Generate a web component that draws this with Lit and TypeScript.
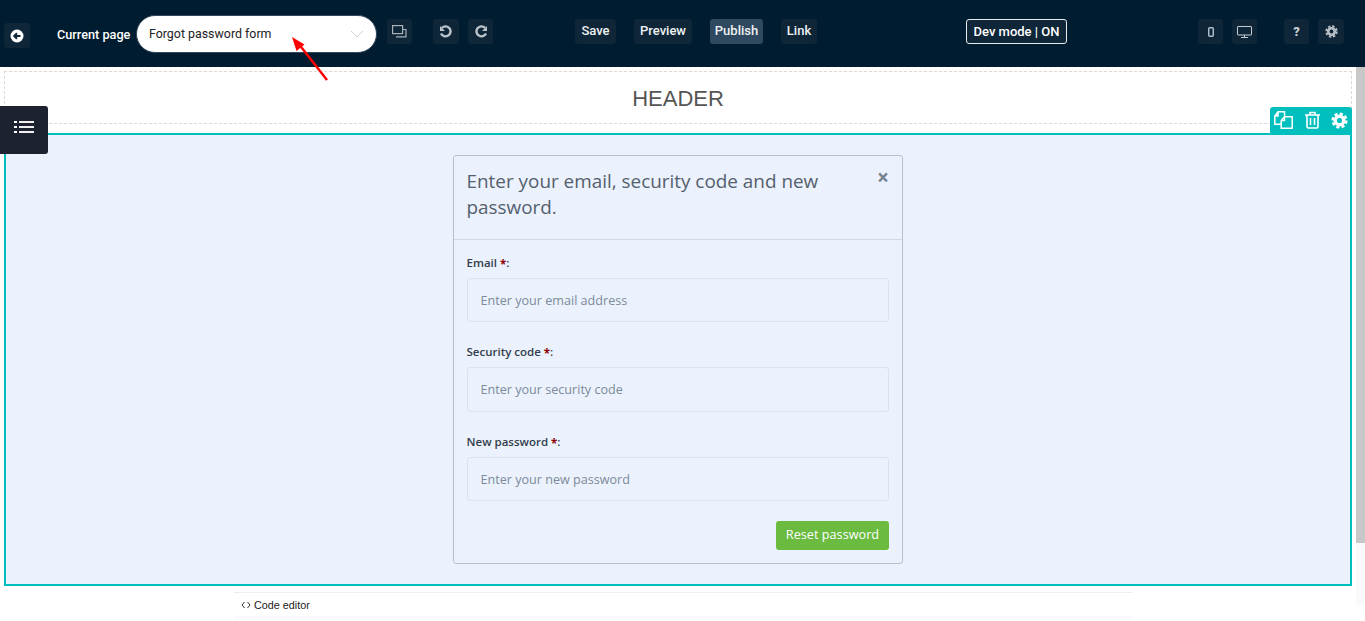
import { LitElement, html, css, svg } from "lit";
import { customElement } from "lit/decorators.js";

const gear = (c: string) => svg`<circle cx="8" cy="8" r="4" fill="none" stroke=${c} stroke-width="3.2"/><circle cx="8" cy="8" r="6.4" fill="none" stroke=${c} stroke-width="2.4" stroke-dasharray="3 2.03"/>`;

@customElement("app-root")
export class AppRoot extends LitElement {
  static styles = css`
    :host { display: block; height: 621px; overflow: hidden; position: relative; background: #fff; font-family: "Liberation Sans", Arial, sans-serif; }
    * { box-sizing: border-box; }
    .toolbar { height: 67px; background: #001c30; display: flex; align-items: flex-start; padding: 19px 0 0 4px; font-family: Roboto, "Liberation Sans", sans-serif; color: #fff; }
    .btn { height: 25px; min-width: 25px; background: #0e2638; border-radius: 3px; display: flex; align-items: center; justify-content: center; font-size: 13px; font-weight: 500; color: #eef1f3; padding: 0 0 2px; flex: none; }
    .btn svg { display: block; flex: none; }
    .icon { padding: 0; width: 25px; }
    .back { margin-top: 4px; width: 26px; }
    .label { margin: 8px 0 0 27px; width: 79px; font-size: 12.7px; font-weight: 500; line-height: 16px; white-space: nowrap; flex: none; }
    .select { margin: -4px 0 0 0; width: 241px; height: 38px; border-radius: 19px; background: #fff; border: 1px solid #33475a; color: #222; font-size: 12.4px; display: flex; align-items: center; justify-content: space-between; padding: 0 12px 1px 12px; flex: none; }
    .ml10 { margin-left: 10px; } .ml21 { margin-left: 21px; } .ml9 { margin-left: 9px; }
    .ml18 { margin-left: 18px; } .ml82 { margin-left: 82px; } .ml149 { margin-left: 149px; } .ml27 { margin-left: 27px; }
    .ml131 { margin-left: 131px; }
    .publish { background: #2f4a60; }
    .dev { height: 25px; width: 101px; border: 1px solid #e8ecef; border-radius: 3px; background: #0e2638; font-size: 13px; font-weight: 500; display: flex; align-items: center; justify-content: center; flex: none; }
    .w41 { width: 41px; } .w58 { width: 58px; } .w53 { width: 53px; } .w36 { width: 36px; }
    .w26 { width: 26px; }
    .help { font-size: 13px; font-weight: 900; color: #c7ccd1; }

    .body { display: flex; height: 554px; }
    .page { flex: 1; min-width: 0; padding: 4px 4px 0 4px; position: relative; }
    .scroll { width: 9px; height: 538px; background: #fafafa; flex: none; }
    .thumb { height: 476px; background: #c8c8c8; }
    .header { height: 53px; border: 1px dashed #d9d9d9; display: flex; align-items: center; justify-content: center; font-size: 22px; color: #555; padding-top: 2px; }
    .section { position: relative; margin-top: 9px; height: 453px; border: 2px solid #00bfbd; background: #ebf2fe; padding-top: 20px; }
    .tools { position: absolute; right: -2px; top: -28px; width: 82px; height: 26px; background: #00bfbd; border-radius: 3px 3px 0 0; display: flex; align-items: center; gap: 10px; padding: 0 4px 0 4px; }
    .copy { margin-right: 1px; }
    .tab { position: absolute; left: 0; top: 39px; width: 48px; height: 48px; background: #1c2230; border-radius: 0 3px 3px 0; display: flex; align-items: center; justify-content: center; padding-bottom: 6px; }
    .card { width: 450px; margin: 0 auto; height: 409px; border: 1px solid #b8c0cc; border-radius: 3px; font-family: "Open Sans", sans-serif; }
    .head { height: 84px; border-bottom: 1px solid #d0dae6; padding: 12px 13px 0 12.5px; display: flex; justify-content: space-between; align-items: flex-start; }
    .title { font-size: 18.9px; line-height: 26px; color: #55606d; width: 380px; }
    .close { font-size: 21px; font-weight: 700; line-height: 18px; color: #76818e; }
    .form { padding: 13.8px 13px 0 12.5px; }
    .group { margin-bottom: 21px; }
    .group label { display: block; height: 18px; line-height: 18px; font-size: 11.5px; font-weight: 600; color: #333d4b; margin-bottom: 6px; }
    .group b { color: #8b0000; font-weight: 700; vertical-align: -2px; line-height: 1; }
    input { display: block; width: 100%; height: 44.5px; border: 1px solid #d9e2ee; border-radius: 3px; background: transparent; padding: 0 13px; font: 12.6px "Open Sans", sans-serif; outline: none; }
    input::placeholder { color: #7c8a99; opacity: 1; }
    .actions { display: flex; justify-content: flex-end; margin-top: -1.3px; }
    .reset { height: 29px; width: 113px; background: #6abb3f; color: #fff; border-radius: 3px; font-size: 12.7px; display: flex; align-items: center; justify-content: center; padding-bottom: 3px; }
    .code { width: 899px; margin: 6px 0 0 230px; height: 27px; border-top: 1px solid #eee; border-bottom: 3px solid #fafafa; font-size: 10.8px; color: #222; display: flex; align-items: center; padding-left: 7px; gap: 3px; }
    .arrow { position: absolute; left: 285px; top: 30px; pointer-events: none; }
  `;

  render() {
    return html`
      <div class="toolbar">
        <div class="btn icon back">
          <svg width="14" height="14" viewBox="0 0 14 14"><circle cx="7" cy="7" r="6.5" fill="#fff"/><path d="M10.5 7H4.500M7 4.200 4.200 7 7 9.800" fill="none" stroke="#0e2638" stroke-width="2"/></svg>
        </div>
        <div class="label">Current page</div>
        <div class="select">
          <span>Forgot password form</span>
          <svg width="14" height="8" viewBox="0 0 14 8"><path d="M1 1l6 6 6-6" fill="none" stroke="#c9d3d8" stroke-width="1"/></svg>
        </div>
        <div class="btn icon ml10">
          <svg width="15" height="13" viewBox="0 0 15 13" fill="none" stroke="#a9b1b9" stroke-width="1.200"><rect x=".6" y=".6" width="10" height="8"/><path d="M4 11.800h10V4.500h-3"/></svg>
        </div>
        <div class="btn icon ml21 w26">
          <svg width="14" height="14" viewBox="0 0 14 14" fill="none" stroke="#bcc3c9" stroke-width="2.400"><path d="M3 2.800A5 5 0 1 1 2 8.500"/><path d="M1 1v5h5z" fill="#bcc3c9" stroke="none"/></svg>
        </div>
        <div class="btn icon ml9">
          <svg width="14" height="14" viewBox="0 0 14 14" fill="none" stroke="#bcc3c9" stroke-width="2.400"><path d="M11 2.800A5 5 0 1 0 12 8.500"/><path d="M13 1v5H8z" fill="#bcc3c9" stroke="none"/></svg>
        </div>
        <div class="btn w41 ml82">Save</div>
        <div class="btn w58 ml18">Preview</div>
        <div class="btn publish w53 ml18">Publish</div>
        <div class="btn w36 ml18">Link</div>
        <div class="dev ml149">Dev mode | ON</div>
        <div class="btn icon ml131">
          <svg width="6" height="10" viewBox="0 0 6 10"><rect x=".75" y=".75" width="4.500" height="8.500" rx="1" fill="none" stroke="#a9c0d0" stroke-width="1.500"/></svg>
        </div>
        <div class="btn icon ml9">
          <svg width="15" height="12" viewBox="0 0 15 12" fill="none" stroke="#c7ccd1" stroke-width="1"><rect x=".5" y=".5" width="14" height="8.500" rx=".5"/><path d="M7.500 9v2.500M4 11.500h7"/></svg>
        </div>
        <div class="btn icon ml27"><span class="help">?</span></div>
        <div class="btn icon ml9 w26">
          <svg width="13" height="13" viewBox="0 0 16 16">${gear("#b8bfc6")}</svg>
        </div>
      </div>
      <div class="body">
        <div class="page">
          <div class="header">HEADER</div>
          <div class="section">
            <div class="tools">
              <svg class="copy" width="19" height="18" viewBox="0 0 19 18" fill="none" stroke="#fff" stroke-width="1.500"><path d="M4 .8h6.500v4M7 13.200H.8V5L4 .8V5H.8"/><path d="M10.500 5.800h7.700V17.200H7.200V9.500L10.500 5.800V9.500H7.200"/></svg>
              <svg width="17" height="18" viewBox="0 0 17 18" fill="none" stroke="#fff" stroke-width="1.600"><path d="M1 4h15M6 4V1.500h5V4M3 4v12l1 1h9l1-1V4"/><path d="M6.500 7v7M10.500 7v7"/></svg>
              <svg width="17" height="17" viewBox="0 0 16 16">${gear("#fff")}</svg>
            </div>
            <div class="card">
              <div class="head">
                <div class="title">Enter your email, security code and new password.</div>
                <div class="close">×</div>
              </div>
              <div class="form">
                <div class="group">
                  <label>Email <b>*</b>:</label>
                  <input placeholder="Enter your email address" />
                </div>
                <div class="group">
                  <label>Security code <b>*</b>:</label>
                  <input placeholder="Enter your security code" />
                </div>
                <div class="group">
                  <label>New password <b>*</b>:</label>
                  <input placeholder="Enter your new password" />
                </div>
                <div class="actions"><div class="reset">Reset password</div></div>
              </div>
            </div>
          </div>
          <div class="code">
            <svg width="10" height="8" viewBox="0 0 10 8" fill="none" stroke="#333" stroke-width="1"><path d="M3.500 1 1 4l2.500 3M6.500 1 9 4 6.500 7"/></svg>
            <span>Code editor</span>
          </div>
          <div class="tab">
            <svg width="20" height="12" viewBox="0 0 20 12"><path d="M5 1h15M5 6h15M5 11h15" stroke="#f0f0f0" stroke-width="1.800"/><path d="M0 0h3v2H0zM0 5h3v2H0zM0 10h3v2H0z" fill="#fff"/></svg>
          </div>
        </div>
        <div class="scroll"><div class="thumb"></div></div>
      </div>
      <svg class="arrow" width="50" height="56" viewBox="0 0 50 56"><path d="M42 50 13 13" stroke="#f00" stroke-width="2.400"/><path d="M7 7 19.500 14.500 11.500 21z" fill="#f00"/></svg>
    `;
  }
}
